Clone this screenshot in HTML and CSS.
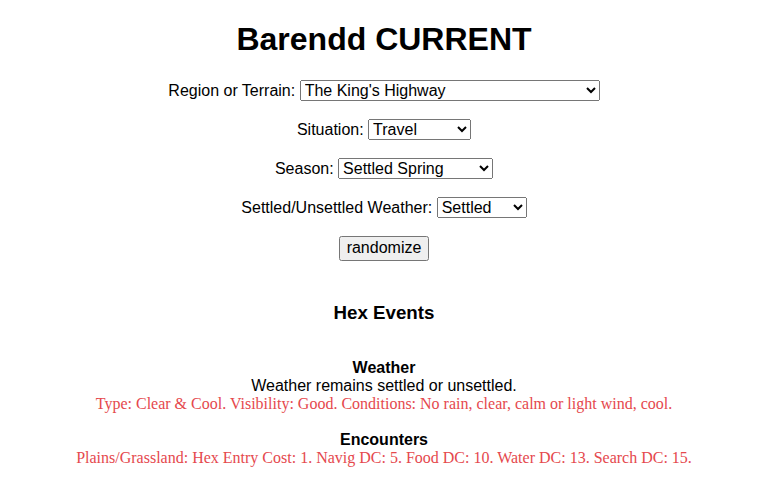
FILE: index.html
```html
<!DOCTYPE html>
<html>
<head>
<meta charset="utf-8">
<link rel="stylesheet" href="styles.css">
<title>Barendd CURRENT</title>
</head>
<body>
<h1 class="title">Barendd CURRENT</h1>
<form class="controls">
  <p class="row"><label>Region or Terrain: <select class="sel sel-region"><option>The King's Highway</option></select></label></p>
  <p class="row"><label>Situation: <select class="sel sel-situation"><option>Travel</option></select></label></p>
  <p class="row"><label>Season: <select class="sel sel-season"><option>Settled Spring</option></select></label></p>
  <p class="row"><label>Settled/Unsettled Weather: <select class="sel sel-weather"><option>Settled</option></select></label></p>
  <p class="row row-btn"><button type="button" class="btn">randomize</button></p>
</form>
<h3 class="events-title">Hex Events</h3>
<div class="events">
  <div class="event">
    <div class="event-head">Weather</div>
    <div class="event-text">Weather remains settled or unsettled.</div>
    <div class="event-detail">Type: Clear &amp; Cool. Visibility: Good. Conditions: No rain, clear, calm or light wind, cool.</div>
  </div>
  <div class="event">
    <div class="event-head">Encounters</div>
    <div class="event-detail">Plains/Grassland: Hex Entry Cost: 1. Navig DC: 5. Food DC: 10. Water DC: 13. Search DC: 15.</div>
  </div>
</div>
</body>
</html>
```
FILE: styles.css
```css
html, body {
  background: #ffffff;
}
body {
  margin: 0;
  padding: 0 8px;
  font-family: "Liberation Sans", Arial, sans-serif;
  font-size: 16px;
  color: #000;
  text-align: center;
}
.title {
  font-size: 32px;
  font-weight: bold;
  margin: 21px 0 21px;
}
.controls {
  margin: 0;
}
.row {
  margin: 16px 0;
  line-height: 23px;
}
.row-btn {
  margin-top: 17px;
}
.sel {
  font-family: "Liberation Sans", Arial, sans-serif;
  font-size: 16px;
  height: 21px;
  padding: 0;
  vertical-align: baseline;
}
.sel-region { width: 300px; }
.sel-situation { width: 103px; }
.sel-season { width: 155px; }
.sel-weather { width: 90px; }
.btn {
  font-family: "Liberation Sans", Arial, sans-serif;
  font-size: 16px;
  padding: 1px 6px 2px;
}
.events-title {
  font-size: 18.72px;
  font-weight: bold;
  margin: 41px 0 35px;
}
.events {
  line-height: 18px;
}
.event {
  margin-bottom: 18px;
}
.event-head {
  font-weight: bold;
}
.event-detail {
  font-family: "Liberation Serif", "Times New Roman", serif;
  color: #e5484d;
}
```
